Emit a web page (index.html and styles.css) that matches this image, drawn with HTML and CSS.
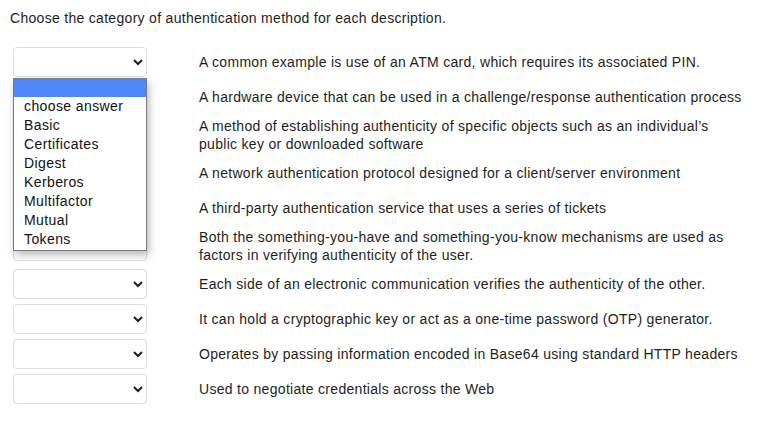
FILE: index.html
```html
<!DOCTYPE html>
<html>
<head>
<meta charset="utf-8">
<link rel="stylesheet" href="styles.css">
</head>
<body>
<div class="page">
  <p class="prompt">Choose the category of authentication method for each description.</p>
  <div class="rows">
    <div class="row first">
      <div class="pick">
        <select class="sel"><option></option></select>
        <div class="menu">
          <div class="opt hl"></div>
          <div class="opt">choose answer</div>
          <div class="opt">Basic</div>
          <div class="opt">Certificates</div>
          <div class="opt">Digest</div>
          <div class="opt">Kerberos</div>
          <div class="opt">Multifactor</div>
          <div class="opt">Mutual</div>
          <div class="opt">Tokens</div>
        </div>
      </div>
      <div class="desc">A common example is use of an ATM card, which requires its associated PIN.</div>
    </div>
    <div class="row"><div class="pick"><select class="sel"><option></option></select></div><div class="desc">A hardware device that can be used in a challenge/response authentication process</div></div>
    <div class="row"><div class="pick"><select class="sel"><option></option></select></div><div class="desc">A method of establishing authenticity of specific objects such as an individual’s<br>public key or downloaded software</div></div>
    <div class="row"><div class="pick"><select class="sel"><option></option></select></div><div class="desc">A network authentication protocol designed for a client/server environment</div></div>
    <div class="row"><div class="pick"><select class="sel"><option></option></select></div><div class="desc">A third-party authentication service that uses a series of tickets</div></div>
    <div class="row"><div class="pick"><select class="sel"><option></option></select></div><div class="desc">Both the something-you-have and something-you-know mechanisms are used as<br>factors in verifying authenticity of the user.</div></div>
    <div class="row"><div class="pick"><select class="sel"><option></option></select></div><div class="desc">Each side of an electronic communication verifies the authenticity of the other.</div></div>
    <div class="row"><div class="pick"><select class="sel"><option></option></select></div><div class="desc">It can hold a cryptographic key or act as a one-time password (OTP) generator.</div></div>
    <div class="row"><div class="pick"><select class="sel"><option></option></select></div><div class="desc">Operates by passing information encoded in Base64 using standard HTTP headers</div></div>
    <div class="row"><div class="pick"><select class="sel"><option></option></select></div><div class="desc">Used to negotiate credentials across the Web</div></div>
  </div>
</div>
</body>
</html>
```
FILE: styles.css
```css
html, body {
  margin: 0;
  padding: 0;
  background: #ffffff;
}
.page {
  width: 765px;
  height: 445px;
  padding: 9px 0 0 10px;
  box-sizing: border-box;
  font-family: "Liberation Sans", Arial, sans-serif;
  font-size: 14px;
  letter-spacing: 0.3px;
  color: #1e1e1e;
  overflow: hidden;
}
.prompt {
  margin: 0;
  line-height: 18px;
}
.rows {
  display: flex;
  flex-direction: column;
  gap: 5px;
  margin-top: 20px;
  padding-left: 3px;
}
.row {
  display: flex;
  align-items: center;
}
.pick {
  position: relative;
  width: 134px;
  flex: none;
  margin-right: 52px;
}
.sel {
  display: block;
  width: 134px;
  height: 30px;
  border: 1px solid #dedede;
  border-radius: 4px;
  background: #ffffff;
  font-family: "Liberation Sans", Arial, sans-serif;
  font-size: 14px;
  color: #1e1e1e;
}
.desc {
  line-height: 18px;
  white-space: nowrap;
}
.menu {
  position: absolute;
  left: 0;
  top: 31px;
  width: 134px;
  box-sizing: border-box;
  border: 1px solid #7a7a7a;
  background: #ffffff;
  box-shadow: 2px 4px 8px rgba(0, 0, 0, 0.28);
  z-index: 5;
  padding-bottom: 1px;
}
.opt {
  height: 19px;
  line-height: 19px;
  padding-left: 10px;
  letter-spacing: 0.4px;
  color: #111111;
}
.opt.hl {
  height: 18px;
  background: #4f86f8;
}
```
